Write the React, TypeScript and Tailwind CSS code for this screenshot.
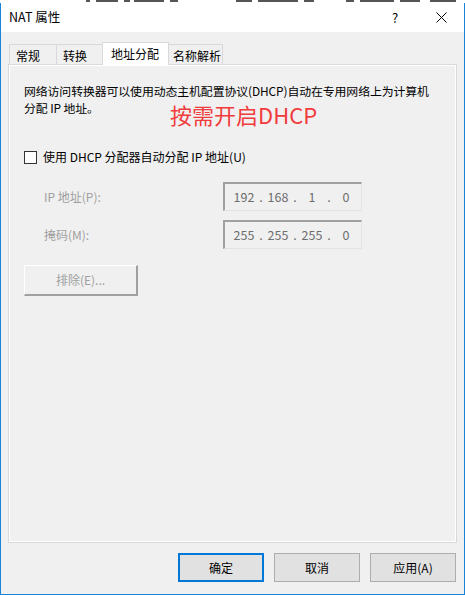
import React from 'react';

const ui = '"Segoe UI", "Noto Sans CJK SC", "Noto Sans", sans-serif';

const Tab = ({ label, active = false, w }: { label: string; active?: boolean; w: string }) =>
  active ? (
    <div className={`relative z-10 -mb-px -mx-[2px] h-[23px] ${w} bg-white border border-b-0 border-[#d9d9d9] flex items-center pl-[8px] text-black`}>
      {label}
    </div>
  ) : (
    <div className={`h-[20px] ${w} bg-[#f0f0f0] border border-b-0 border-[#d9d9d9] -ml-px first:ml-0 flex items-center pl-[6px] pt-[2px] text-black`}>
      {label}
    </div>
  );

const IpField = ({ parts }: { parts: string[] }) => (
  <div className="w-[139px] h-[29px] bg-[#f0f0f0] border-t-2 border-l-2 border-[#a0a0a0] border-r border-b border-r-[#e3e3e3] border-b-[#e3e3e3] flex items-center pl-[7px] text-[#6d6d6d] text-[12.5px]">
    {parts.map((p, i) => (
      <React.Fragment key={i}>
        <span className="w-[24px] text-center">{p}</span>
        {i < parts.length - 1 && <span className="w-[10px] text-center">.</span>}
      </React.Fragment>
    ))}
  </div>
);

const DlgButton = ({ label, primary = false }: { label: string; primary?: boolean }) => (
  <div
    className={`w-[86px] h-[29px] flex items-center justify-center bg-[#e1e1e1] text-black ${
      primary ? 'border-2 border-[#0078d7]' : 'border border-[#adadad]'
    }`}
  >
    {label}
  </div>
);

// bits of the window underneath that peek out above the title bar
const peek = [
  [86, 4], [96, 22], [124, 6], [134, 30], [170, 8],
  [236, 16], [258, 40], [304, 10], [346, 8], [360, 34], [400, 20], [430, 26],
];

export default function App() {
  return (
    <div className="w-[465px] h-[595px] bg-white flex flex-col overflow-hidden text-[12px]" style={{ fontFamily: ui }}>
      <div className="h-[3px] relative">
        {peek.map(([x, w], i) => (
          <div key={i} className="absolute top-0 h-[2px] bg-[#555]" style={{ left: x, width: w }} />
        ))}
      </div>

      <div className="flex-1 flex flex-col border-x border-b border-[#1883d7]">
        {/* title bar */}
        <div className="h-[29px] bg-white flex items-center pl-[8px] pr-[14px] text-[12.5px] text-black">
          <span className="flex-1">NAT 属性</span>
          <span className="w-[10px] mr-[36px] text-center text-[13px]">?</span>
          <svg width="11" height="11" viewBox="0 0 11 11" className="mr-[3px]">
            <path d="M0.5 0.5 L10.5 10.5 M10.5 0.5 L0.5 10.5" stroke="#000" strokeWidth="1" />
          </svg>
        </div>

        {/* client area */}
        <div className="flex-1 bg-[#f0f0f0] flex flex-col px-[7px]">
          <div className="flex items-end pt-[10px] pl-[1px]">
            <Tab label="常规" w="w-[48px]" />
            <Tab label="转换" w="w-[48px]" />
            <Tab label="地址分配" w="w-[67px]" active />
            <Tab label="名称解析" w="w-[57px]" />
          </div>

          <div className="h-[479px] border border-[#d9d9d9]">
            <div className="h-full border border-white px-[14px] pt-[16px] flex flex-col text-black">
              <p className="text-[11.9px] leading-[17px] tracking-[-0.1px] whitespace-nowrap">
                网络访问转换器可以使用动态主机配置协议(DHCP)自动在专用网络上为计算机
                <br />
                分配 IP 地址。
              </p>
              <div className="-mt-[16px] pl-[146px] text-[22px] leading-[28px] text-[#f03c3c]">按需开启DHCP</div>

              <label className="mt-[20px] flex items-center gap-[6px] text-[12px]">
                <span className="w-[13px] h-[13px] bg-white border border-[#333]" />
                使用 DHCP 分配器自动分配 IP 地址(U)
              </label>

              <div className="mt-[16px] flex items-center pl-[20px] text-[#a0a0a0]">
                <span className="flex-1">IP 地址(P):</span>
                <div className="mr-[79px]">
                  <IpField parts={['192', '168', '1', '0']} />
                </div>
              </div>
              <div className="mt-[9px] flex items-center pl-[20px] text-[#a0a0a0]">
                <span className="flex-1">掩码(M):</span>
                <div className="mr-[79px]">
                  <IpField parts={['255', '255', '255', '0']} />
                </div>
              </div>

              <div className="mt-[16px] w-[114px] h-[31px] bg-[#f0f0f0] border-t border-l border-white border-r-2 border-b-2 border-r-[#a0a0a0] border-b-[#a0a0a0] flex items-center justify-center text-[#a0a0a0]">
                排除(E)...
              </div>
            </div>
          </div>

          <div className="flex justify-end gap-[10px] pt-[10px] pr-[1px]">
            <DlgButton label="确定" primary />
            <DlgButton label="取消" />
            <DlgButton label="应用(A)" />
          </div>
        </div>
      </div>
    </div>
  );
}
